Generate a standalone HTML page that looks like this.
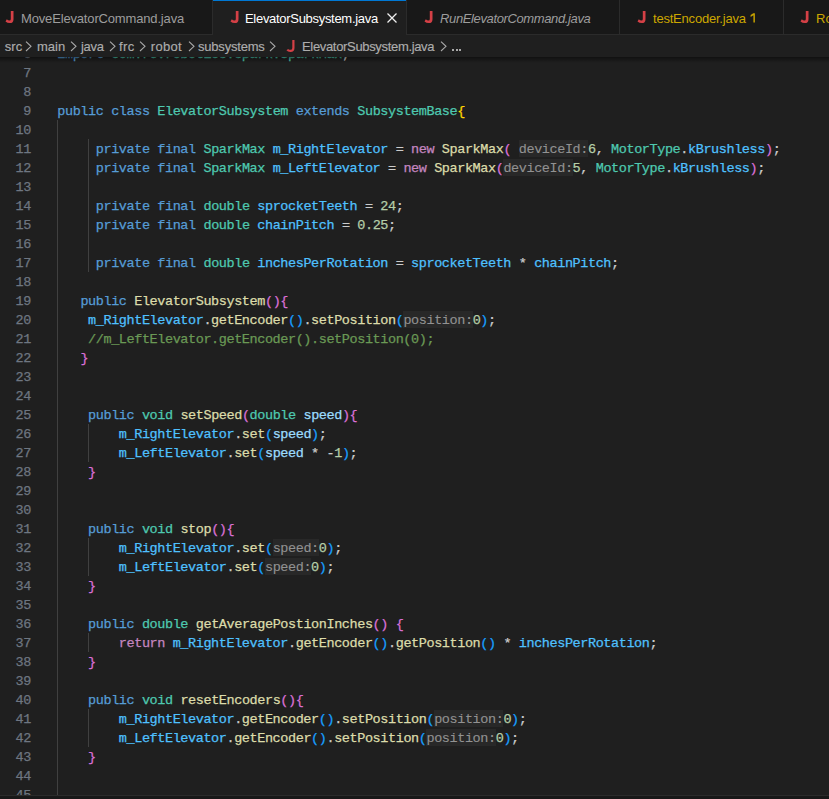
<!DOCTYPE html>
<html><head><meta charset="utf-8">
<style>
*{box-sizing:border-box}
html,body{margin:0;padding:0;width:829px;height:799px;overflow:hidden;background:#1f1f1f}
body{position:relative;font-family:"Liberation Sans",sans-serif}
.abs{position:absolute}
#tabs{position:absolute;left:0;top:0;width:829px;height:35px;background:#181818;border-bottom:1px solid #2b2b2b}
.tab{position:absolute;top:0;height:35px;border-right:1px solid #2b2b2b;background:#181818;border-bottom:1px solid #2b2b2b}
.tab.active{background:#1f1f1f;border-bottom:none;}
.tab.active:before{content:"";position:absolute;left:0;right:0;top:0;height:1px;background:#0078d4}
.tt{position:absolute;top:11px;font-size:13px;line-height:16px;white-space:nowrap;color:#9d9d9d}
.jic{position:absolute;top:10px;width:9px;height:14px}
#crumbs{position:absolute;left:0;top:35px;width:829px;height:22px;background:#1f1f1f}
.cb{position:absolute;top:39px;font-size:13px;line-height:16px;color:#adadad;-webkit-text-stroke:0.15px currentColor;white-space:nowrap}
.chev{position:absolute;top:40.5px;width:8px;height:11px}
#editor{position:absolute;left:0;top:57px;width:829px;height:738px;overflow:hidden;background:#1f1f1f}
#shadow{position:absolute;left:0;top:57px;width:829px;height:6px;background:linear-gradient(rgba(0,0,0,0.45),rgba(0,0,0,0))}
.ln{position:absolute;left:0;top:1px;width:31px;text-align:right;color:#6e7681}
.code{position:absolute;left:57.3px;top:1px;white-space:pre;color:#cccccc}
.row{position:absolute;left:0;height:19px;width:829px;font-family:"Liberation Mono",monospace;font-size:13.5px;line-height:19px;letter-spacing:-0.412px;-webkit-text-stroke:0.25px currentColor}
.guide{position:absolute;width:1px;background:#404040}
#bottom{position:absolute;left:0;top:795px;width:829px;height:4px;background:#181818;border-top:1px solid #2b2b2b}
.k{color:#569cd6}.t{color:#4ec9b0}.f{color:#dcdcaa}.c{color:#4fc1ff}.v{color:#9cdcfe}.n{color:#b5cea8}.m{color:#6a9955}.p{color:#c586c0}
.b1{color:#ffd700}.b2{color:#da70d6}.b3{color:#179fff}
.h{color:#929292;-webkit-text-stroke:0.1px currentColor;background:rgba(97,97,97,0.13);padding-top:1.5px}
</style></head><body>
<div id="tabs">
  <div class="tab" style="left:0;width:213px">
    <svg class="jic" style="left:5px" viewBox="0 0 9 14"><path d="M5.8 0.9 H8.5 V9.2 Q8.5 13.1 4.7 13.1 Q2.3 13.1 0.5 11.6 L1.8 9.3 Q3.1 10.5 4.5 10.5 Q5.8 10.5 5.8 8.9 Z" fill="#d44046"/></svg>
    <div class="tt" style="left:21px;letter-spacing:-0.16px">MoveElevatorCommand.java</div>
  </div>
  <div class="tab active" style="left:213px;width:194px">
    <svg class="jic" style="left:16.5px" viewBox="0 0 9 14"><path d="M5.8 0.9 H8.5 V9.2 Q8.5 13.1 4.7 13.1 Q2.3 13.1 0.5 11.6 L1.8 9.3 Q3.1 10.5 4.5 10.5 Q5.8 10.5 5.8 8.9 Z" fill="#d44046"/></svg>
    <div class="tt" style="left:32px;color:#ffffff;letter-spacing:-0.3px">ElevatorSubsystem.java</div>
    <svg class="abs" style="left:174px;top:13px;width:10px;height:10px" viewBox="0 0 10 10"><path d="M0.5 0.5 L9.5 9.5 M9.5 0.5 L0.5 9.5" stroke="#f0f0f0" stroke-width="1.3"/></svg>
  </div>
  <div class="tab" style="left:407px;width:213px">
    <svg class="jic" style="left:16.6px" viewBox="0 0 9 14"><path d="M5.8 0.9 H8.5 V9.2 Q8.5 13.1 4.7 13.1 Q2.3 13.1 0.5 11.6 L1.8 9.3 Q3.1 10.5 4.5 10.5 Q5.8 10.5 5.8 8.9 Z" fill="#d44046"/></svg>
    <div class="tt" style="left:33px;font-style:italic;letter-spacing:-0.37px">RunElevatorCommand.java</div>
  </div>
  <div class="tab" style="left:620px;width:164px">
    <svg class="jic" style="left:16.6px" viewBox="0 0 9 14"><path d="M5.8 0.9 H8.5 V9.2 Q8.5 13.1 4.7 13.1 Q2.3 13.1 0.5 11.6 L1.8 9.3 Q3.1 10.5 4.5 10.5 Q5.8 10.5 5.8 8.9 Z" fill="#d44046"/></svg>
    <div class="tt" style="left:33px;color:#cca700;letter-spacing:-0.21px">testEncoder.java</div>
    <svg class="abs" style="left:130px;top:12.5px;width:6px;height:10px" viewBox="0 0 6 10"><path d="M0.6 2.1 L3.3 0.3 H4.9 V9.5 H3.4 V2.3 L0.6 3.9 Z" fill="#c4a000"/></svg>
  </div>
  <div class="tab" style="left:784px;width:100px">
    <svg class="jic" style="left:15.6px" viewBox="0 0 9 14"><path d="M5.8 0.9 H8.5 V9.2 Q8.5 13.1 4.7 13.1 Q2.3 13.1 0.5 11.6 L1.8 9.3 Q3.1 10.5 4.5 10.5 Q5.8 10.5 5.8 8.9 Z" fill="#d44046"/></svg>
    <div class="tt" style="left:32px;color:#cca700">RobotContainer.java</div>
  </div>
</div>
<div id="crumbs"></div>
<div class="cb" style="left:4.8px">src</div>
<div class="cb" style="left:37px">main</div>
<div class="cb" style="left:81px;letter-spacing:-0.3px">java</div>
<div class="cb" style="left:119px;letter-spacing:0.4px">frc</div>
<div class="cb" style="left:150.8px;letter-spacing:0.3px">robot</div>
<div class="cb" style="left:198px;letter-spacing:-0.2px">subsystems</div>
<div class="cb" style="left:302px;letter-spacing:-0.33px">ElevatorSubsystem.java</div>
<div class="abs" style="left:452px;top:49px;width:2px;height:2px;background:#a9a9a9"></div><div class="abs" style="left:455.5px;top:49px;width:2px;height:2px;background:#a9a9a9"></div><div class="abs" style="left:459px;top:49px;width:2px;height:2px;background:#a9a9a9"></div>
<svg class="chev" style="left:25px" viewBox="0 0 8 11"><path d="M1 0.6 L6 5.3 L1 10" fill="none" stroke="#a9a9a9" stroke-width="1.1"/></svg>
<svg class="chev" style="left:70px" viewBox="0 0 8 11"><path d="M1 0.6 L6 5.3 L1 10" fill="none" stroke="#a9a9a9" stroke-width="1.1"/></svg>
<svg class="chev" style="left:108.8px" viewBox="0 0 8 11"><path d="M1 0.6 L6 5.3 L1 10" fill="none" stroke="#a9a9a9" stroke-width="1.1"/></svg>
<svg class="chev" style="left:139.2px" viewBox="0 0 8 11"><path d="M1 0.6 L6 5.3 L1 10" fill="none" stroke="#a9a9a9" stroke-width="1.1"/></svg>
<svg class="chev" style="left:188px" viewBox="0 0 8 11"><path d="M1 0.6 L6 5.3 L1 10" fill="none" stroke="#a9a9a9" stroke-width="1.1"/></svg>
<svg class="chev" style="left:269px" viewBox="0 0 8 11"><path d="M1 0.6 L6 5.3 L1 10" fill="none" stroke="#a9a9a9" stroke-width="1.1"/></svg>
<svg class="chev" style="left:440px" viewBox="0 0 8 11"><path d="M1 0.6 L6 5.3 L1 10" fill="none" stroke="#a9a9a9" stroke-width="1.1"/></svg>
<svg class="jic" style="left:286px;top:39px" viewBox="0 0 9 14"><path d="M7.4 1.1 V8.9 Q7.4 11.9 4.4 11.9 Q2.3 11.9 1.3 10.6" fill="none" stroke="#d44046" stroke-width="2.2"/></svg>

<div id="editor">
<div class="guide" style="left:57px;top:62.5px;height:684.0px"></div>
<div class="guide" style="left:88px;top:81.5px;height:133.0px"></div>
<div class="guide" style="left:88px;top:366.5px;height:38.0px"></div>
<div class="guide" style="left:88px;top:480.5px;height:38.0px"></div>
<div class="guide" style="left:88px;top:575.5px;height:19.0px"></div>
<div class="guide" style="left:88px;top:651.5px;height:38.0px"></div>
<div class="row" style="top:-13.5px"><span class="ln">6</span><span class="code"><span class="k">import</span> <span class="t">com.revrobotics.spark.SparkMax</span>;</span></div>
<div class="row" style="top:5.5px"><span class="ln">7</span><span class="code"></span></div>
<div class="row" style="top:24.5px"><span class="ln">8</span><span class="code"></span></div>
<div class="row" style="top:43.5px"><span class="ln">9</span><span class="code"><span class="k">public</span> <span class="k">class</span> <span class="t">ElevatorSubsystem</span> <span class="k">extends</span> <span class="t">SubsystemBase</span><span class="b1">{</span></span></div>
<div class="row" style="top:62.5px"><span class="ln">10</span><span class="code"></span></div>
<div class="row" style="top:81.5px"><span class="ln">11</span><span class="code">     <span class="k">private</span> <span class="k">final</span> <span class="t">SparkMax</span> <span class="c">m_RightElevator</span> = <span class="p">new</span> <span class="f">SparkMax</span><span class="b2">(</span> <span class="h">deviceId:</span><span class="n">6</span>, <span class="t">MotorType</span>.<span class="c">kBrushless</span><span class="b2">)</span>;</span></div>
<div class="row" style="top:100.5px"><span class="ln">12</span><span class="code">     <span class="k">private</span> <span class="k">final</span> <span class="t">SparkMax</span> <span class="c">m_LeftElevator</span> = <span class="p">new</span> <span class="f">SparkMax</span><span class="b2">(</span><span class="h">deviceId:</span><span class="n">5</span>, <span class="t">MotorType</span>.<span class="c">kBrushless</span><span class="b2">)</span>;</span></div>
<div class="row" style="top:119.5px"><span class="ln">13</span><span class="code"></span></div>
<div class="row" style="top:138.5px"><span class="ln">14</span><span class="code">     <span class="k">private</span> <span class="k">final</span> <span class="t">double</span> <span class="c">sprocketTeeth</span> = <span class="n">24</span>;</span></div>
<div class="row" style="top:157.5px"><span class="ln">15</span><span class="code">     <span class="k">private</span> <span class="k">final</span> <span class="t">double</span> <span class="c">chainPitch</span> = <span class="n">0.25</span>;</span></div>
<div class="row" style="top:176.5px"><span class="ln">16</span><span class="code"></span></div>
<div class="row" style="top:195.5px"><span class="ln">17</span><span class="code">     <span class="k">private</span> <span class="k">final</span> <span class="t">double</span> <span class="c">inchesPerRotation</span> = <span class="c">sprocketTeeth</span> * <span class="c">chainPitch</span>;</span></div>
<div class="row" style="top:214.5px"><span class="ln">18</span><span class="code"></span></div>
<div class="row" style="top:233.5px"><span class="ln">19</span><span class="code">   <span class="k">public</span> <span class="f">ElevatorSubsystem</span><span class="b2">(){</span></span></div>
<div class="row" style="top:252.5px"><span class="ln">20</span><span class="code">    <span class="c">m_RightElevator</span>.<span class="f">getEncoder</span><span class="b3">()</span>.<span class="f">setPosition</span><span class="b3">(</span><span class="h">position:</span><span class="n">0</span><span class="b3">)</span>;</span></div>
<div class="row" style="top:271.5px"><span class="ln">21</span><span class="code">    <span class="m">//m_LeftElevator.getEncoder().setPosition(0);</span></span></div>
<div class="row" style="top:290.5px"><span class="ln">22</span><span class="code">   <span class="b2">}</span></span></div>
<div class="row" style="top:309.5px"><span class="ln">23</span><span class="code"></span></div>
<div class="row" style="top:328.5px"><span class="ln">24</span><span class="code"></span></div>
<div class="row" style="top:347.5px"><span class="ln">25</span><span class="code">    <span class="k">public</span> <span class="t">void</span> <span class="f">setSpeed</span><span class="b2">(</span><span class="t">double</span> <span class="v">speed</span><span class="b2">){</span></span></div>
<div class="row" style="top:366.5px"><span class="ln">26</span><span class="code">        <span class="c">m_RightElevator</span>.<span class="f">set</span><span class="b3">(</span><span class="v">speed</span><span class="b3">)</span>;</span></div>
<div class="row" style="top:385.5px"><span class="ln">27</span><span class="code">        <span class="c">m_LeftElevator</span>.<span class="f">set</span><span class="b3">(</span><span class="v">speed</span> * -<span class="n">1</span><span class="b3">)</span>;</span></div>
<div class="row" style="top:404.5px"><span class="ln">28</span><span class="code">    <span class="b2">}</span></span></div>
<div class="row" style="top:423.5px"><span class="ln">29</span><span class="code"></span></div>
<div class="row" style="top:442.5px"><span class="ln">30</span><span class="code"></span></div>
<div class="row" style="top:461.5px"><span class="ln">31</span><span class="code">    <span class="k">public</span> <span class="t">void</span> <span class="f">stop</span><span class="b2">(){</span></span></div>
<div class="row" style="top:480.5px"><span class="ln">32</span><span class="code">        <span class="c">m_RightElevator</span>.<span class="f">set</span><span class="b3">(</span><span class="h">speed:</span><span class="n">0</span><span class="b3">)</span>;</span></div>
<div class="row" style="top:499.5px"><span class="ln">33</span><span class="code">        <span class="c">m_LeftElevator</span>.<span class="f">set</span><span class="b3">(</span><span class="h">speed:</span><span class="n">0</span><span class="b3">)</span>;</span></div>
<div class="row" style="top:518.5px"><span class="ln">34</span><span class="code">    <span class="b2">}</span></span></div>
<div class="row" style="top:537.5px"><span class="ln">35</span><span class="code"></span></div>
<div class="row" style="top:556.5px"><span class="ln">36</span><span class="code">    <span class="k">public</span> <span class="t">double</span> <span class="f">getAveragePostionInches</span><span class="b2">()</span> <span class="b2">{</span></span></div>
<div class="row" style="top:575.5px"><span class="ln">37</span><span class="code">        <span class="p">return</span> <span class="c">m_RightElevator</span>.<span class="f">getEncoder</span><span class="b3">()</span>.<span class="f">getPosition</span><span class="b3">()</span> * <span class="c">inchesPerRotation</span>;</span></div>
<div class="row" style="top:594.5px"><span class="ln">38</span><span class="code">    <span class="b2">}</span></span></div>
<div class="row" style="top:613.5px"><span class="ln">39</span><span class="code"></span></div>
<div class="row" style="top:632.5px"><span class="ln">40</span><span class="code">    <span class="k">public</span> <span class="t">void</span> <span class="f">resetEncoders</span><span class="b2">(){</span></span></div>
<div class="row" style="top:651.5px"><span class="ln">41</span><span class="code">        <span class="c">m_RightElevator</span>.<span class="f">getEncoder</span><span class="b3">()</span>.<span class="f">setPosition</span><span class="b3">(</span><span class="h">position:</span><span class="n">0</span><span class="b3">)</span>;</span></div>
<div class="row" style="top:670.5px"><span class="ln">42</span><span class="code">        <span class="c">m_LeftElevator</span>.<span class="f">getEncoder</span><span class="b3">()</span>.<span class="f">setPosition</span><span class="b3">(</span><span class="h">position:</span><span class="n">0</span><span class="b3">)</span>;</span></div>
<div class="row" style="top:689.5px"><span class="ln">43</span><span class="code">    <span class="b2">}</span></span></div>
<div class="row" style="top:708.5px"><span class="ln">44</span><span class="code"></span></div>
<div class="row" style="top:727.5px"><span class="ln">45</span><span class="code"></span></div>
</div>
<div id="shadow"></div>
<div id="bottom"></div>
</body></html>
